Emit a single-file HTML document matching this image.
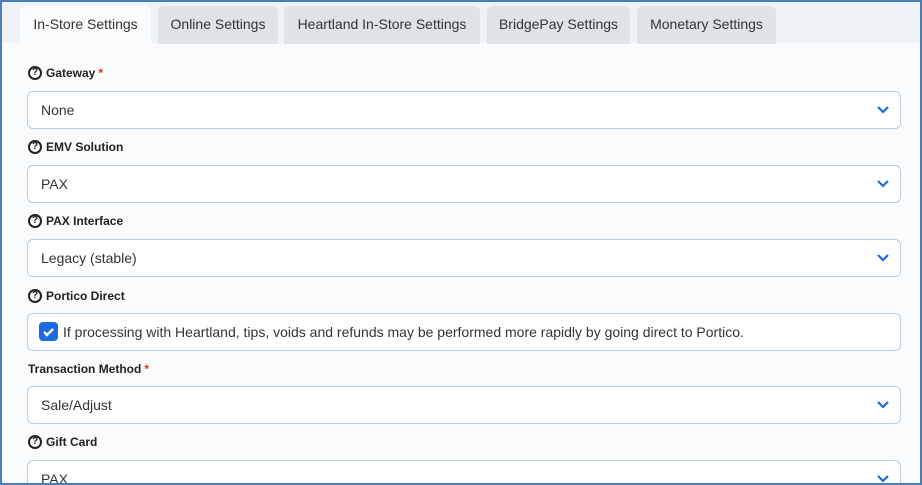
<!DOCTYPE html>
<html><head><style>
*{box-sizing:border-box;margin:0;padding:0}
body{width:922px;height:485px;overflow:hidden;font-family:"Liberation Sans",sans-serif;background:#fafbfc}
.frame{position:absolute;left:0;top:0;width:922px;height:485px;border:2px solid #4a7ebb;overflow:hidden}
.top{position:absolute;left:0;top:0;width:100%;height:41px;background:#eef2f7}
.tab{position:absolute;top:4px;height:38px;background:#e0e3e5;border-radius:6px 6px 0 0;font-size:14px;color:#333;line-height:36px;text-align:center}
.tab.a{background:#fafbfc}
.lbl{position:absolute;left:26px;font-size:12px;font-weight:bold;color:#222;display:flex;align-items:center;height:16px}
.q{width:14px;height:14px;border:2px solid #222;border-radius:50%;font-size:10px;font-weight:bold;line-height:10px;text-align:center;margin-right:4px}
.req{color:#d32;margin-left:3px}
.sel{position:absolute;left:25px;width:874px;height:38px;border:1px solid #b9cde0;border-radius:6px;background:#fff;font-size:14px;color:#333;line-height:36px;padding-left:13px}
.sel svg{position:absolute;right:10px;top:13px}
.cb{position:absolute;left:11px;top:8px;width:19px;height:19px;background:#1a6ae0;border-radius:4px}
</style></head><body><div class="frame">
<div class="top"></div>
<div class="tab a" style="left:18px;width:131px">In-Store Settings</div>
<div class="tab" style="left:156px;width:120px">Online Settings</div>
<div class="tab" style="left:282px;width:196px">Heartland In-Store Settings</div>
<div class="tab" style="left:485px;width:143px">BridgePay Settings</div>
<div class="tab" style="left:635px;width:139px">Monetary Settings</div>

<div class="lbl" style="top:63px"><span class="q">?</span>Gateway<span class="req">*</span></div>
<div class="sel" style="top:89px">None<svg width="14" height="10"><path d="M2 2l5 5 5-5" stroke="#1a6ae0" stroke-width="2.2" fill="none"/></svg></div>
<div class="lbl" style="top:137px"><span class="q">?</span>EMV Solution</div>
<div class="sel" style="top:163px">PAX<svg width="14" height="10"><path d="M2 2l5 5 5-5" stroke="#1a6ae0" stroke-width="2.2" fill="none"/></svg></div>
<div class="lbl" style="top:211px"><span class="q">?</span>PAX Interface</div>
<div class="sel" style="top:237px">Legacy (stable)<svg width="14" height="10"><path d="M2 2l5 5 5-5" stroke="#1a6ae0" stroke-width="2.2" fill="none"/></svg></div>
<div class="lbl" style="top:286px"><span class="q">?</span>Portico Direct</div>
<div class="sel" style="top:311px;padding-left:35px">If processing with Heartland, tips, voids and refunds may be performed more rapidly by going direct to Portico.<div class="cb"><svg width="19" height="19" style="position:absolute;left:0;top:0"><path d="M5 10l3 3 6-6" stroke="#fff" stroke-width="2.4" fill="none"/></svg></div></div>
<div class="lbl" style="top:359px">Transaction Method<span class="req">*</span></div>
<div class="sel" style="top:384px">Sale/Adjust<svg width="14" height="10"><path d="M2 2l5 5 5-5" stroke="#1a6ae0" stroke-width="2.2" fill="none"/></svg></div>
<div class="lbl" style="top:432px"><span class="q">?</span>Gift Card</div>
<div class="sel" style="top:458px">PAX<svg width="14" height="10"><path d="M2 2l5 5 5-5" stroke="#1a6ae0" stroke-width="2.2" fill="none"/></svg></div>
</div></body></html>
